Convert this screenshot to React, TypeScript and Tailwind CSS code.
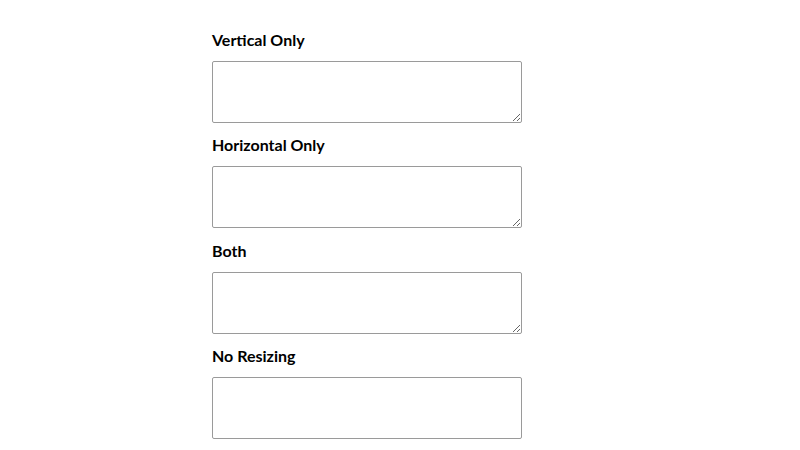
import React from "react";

const items: { label: string; cls: string }[] = [
  { label: "Vertical Only", cls: "resize-y" },
  { label: "Horizontal Only", cls: "resize-x" },
  { label: "Both", cls: "resize" },
  { label: "No Resizing", cls: "resize-none" },
];

export default function App() {
  return (
    <div className="min-h-[450px] bg-white" style={{ fontFamily: "Lato, 'Noto Sans', sans-serif" }}>
      <div className="mx-auto w-[376px] pt-[28px]">
        {items.map((it) => (
          <div key={it.label} className="mb-[10.33px]">
            <label className="block h-6 text-base font-bold leading-6 text-black mb-[9px]">{it.label}</label>
            <textarea
              className={`block w-[310px] h-[62px] border border-[#9a9a9a] rounded-[2px] bg-white ${it.cls}`}
            />
          </div>
        ))}
      </div>
    </div>
  );
}
